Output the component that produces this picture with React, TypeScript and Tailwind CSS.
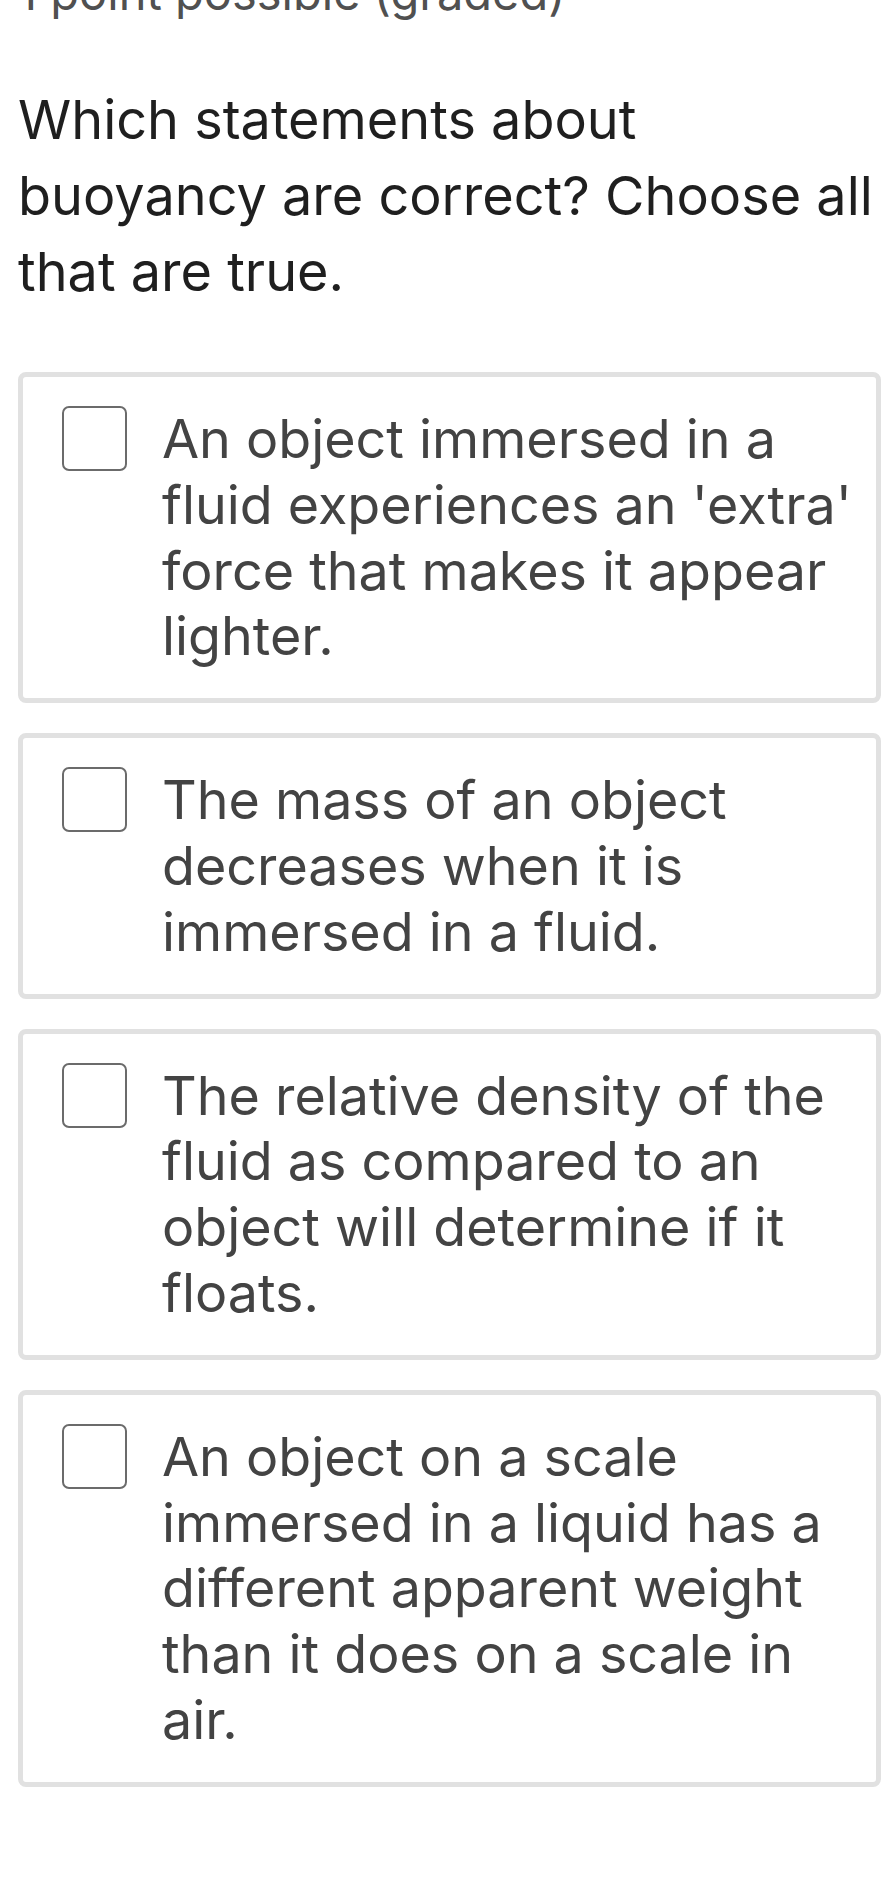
import React from "react";

const options = [
  "An object immersed in a fluid experiences an 'extra' force that makes it appear lighter.",
  "The mass of an object decreases when it is immersed in a fluid.",
  "The relative density of the fluid as compared to an object will determine if it floats.",
  "An object on a scale immersed in a liquid has a different apparent weight than it does on a scale in air.",
];

function Option({ label }: { label: string }) {
  return (
    <label className="flex items-start gap-[35px] rounded-[8px] border-[5px] border-[#e1e1e1] bg-white pl-[39px] pr-[14px] py-[29px]">
      <span className="block h-[65px] w-[65px] shrink-0 rounded-[7px] border-2 border-[#6b6b6b] bg-white" />
      <span className="text-[53.8px] leading-[65.8px] text-[#434343]">{label}</span>
    </label>
  );
}

export default function App() {
  return (
    <div
      className="min-h-[1880px] overflow-hidden bg-white"
      style={{ fontFamily: "Inter, 'Noto Sans', sans-serif" }}
    >
      <div className="pl-[18px] pr-[13px]">
        <p className="mt-[-40px] text-[47px] leading-[66px] text-[#505050]">1 point possible (graded)</p>
        <p className="mt-[56px] text-[54px] leading-[76px] text-[#1f1f1f]">
          Which statements about buoyancy are correct? Choose all that are true.
        </p>
        <div className="mt-[62px] flex flex-col gap-[30px]">
          {options.map((o) => (
            <Option key={o} label={o} />
          ))}
        </div>
      </div>
    </div>
  );
}
